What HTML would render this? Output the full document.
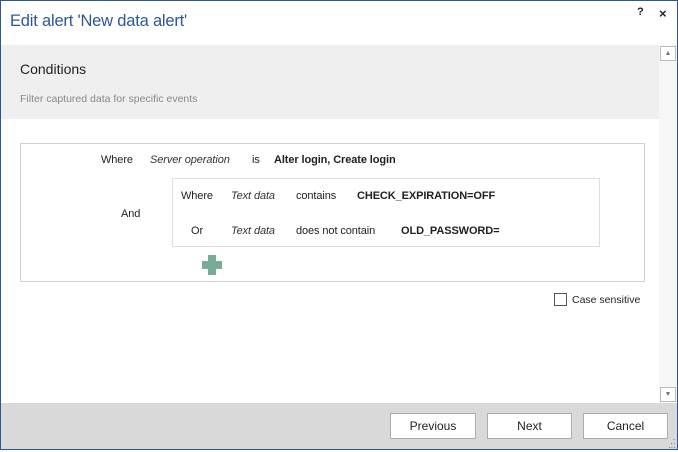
<!DOCTYPE html>
<html><head><style>
*{margin:0;padding:0;box-sizing:border-box}
body{width:678px;height:450px;position:relative;overflow:hidden;background:#fff;font-family:"Liberation Sans",sans-serif;color:#222}
.frame{position:absolute;left:0;top:0;width:678px;height:450px;border:1px solid #2b5797}
.abs{position:absolute;white-space:nowrap}
.t{font-size:11px;letter-spacing:-0.1px}
i{font-style:italic;color:#333}
b{font-weight:bold}
.btn{position:absolute;top:413px;height:26px;border:1px solid #adadad;background:#fff;font-size:12px;text-align:center;line-height:24px}
</style></head><body>
<div class="frame"></div>
<div class="abs" style="left:10px;top:12px;font-size:16.5px;color:#2b5797;letter-spacing:-0.2px">Edit alert 'New data alert'</div>
<div class="abs" style="left:637px;top:6px;font-size:11px;font-weight:bold">?</div>
<div class="abs" style="left:659px;top:6px;font-size:13px;font-weight:bold">×</div>
<div class="abs" style="left:1px;top:45px;width:658px;height:74px;background:#efefef"></div>
<div class="abs" style="left:20px;top:61px;font-size:14px;color:#222">Conditions</div>
<div class="abs" style="left:20px;top:93px;font-size:10.5px;color:#888">Filter captured data for specific events</div>
<div class="abs" style="left:659px;top:45px;width:18px;height:358px;background:#f7f7f7"></div>
<div class="abs" style="left:660px;top:46px;width:16px;height:15px;border:1px solid #bbb;background:#fff;font-size:7px;color:#777;text-align:center;line-height:13px">▲</div>
<div class="abs" style="left:660px;top:387px;width:16px;height:15px;border:1px solid #bbb;background:#fff;font-size:7px;color:#777;text-align:center;line-height:13px">▼</div>
<div class="abs" style="left:20px;top:143px;width:625px;height:139px;border:1px solid #d0d0d0"></div>
<div class="abs t" style="left:101px;top:154px">Where</div>
<div class="abs t" style="left:150px;top:154px"><i>Server operation</i></div>
<div class="abs t" style="left:252px;top:154px">is</div>
<div class="abs t" style="left:274px;top:154px"><b>Alter login, Create login</b></div>
<div class="abs" style="left:172px;top:178px;width:428px;height:69px;border:1px solid #ddd"></div>
<div class="abs t" style="left:121px;top:208px">And</div>
<div class="abs t" style="left:181px;top:190px">Where</div>
<div class="abs t" style="left:231px;top:190px"><i>Text data</i></div>
<div class="abs t" style="left:296px;top:190px">contains</div>
<div class="abs t" style="left:357px;top:190px"><b>CHECK_EXPIRATION=OFF</b></div>
<div class="abs t" style="left:191px;top:225px">Or</div>
<div class="abs t" style="left:231px;top:225px"><i>Text data</i></div>
<div class="abs t" style="left:296px;top:225px">does not contain</div>
<div class="abs t" style="left:401px;top:225px"><b>OLD_PASSWORD=</b></div>
<div class="abs" style="left:208px;top:255px;width:8px;height:20px;background:#7aab98"></div>
<div class="abs" style="left:202px;top:261px;width:20px;height:8px;background:#7aab98"></div>
<div class="abs" style="left:554px;top:293px;width:13px;height:13px;border:1px solid #555;background:#fff"></div>
<div class="abs" style="left:572px;top:294px;font-size:10.5px">Case sensitive</div>
<div class="abs" style="left:1px;top:403px;width:676px;height:46px;background:#d9d9d9"></div>
<div class="btn" style="left:390px;width:86px">Previous</div>
<div class="btn" style="left:487px;width:85px">Next</div>
<div class="btn" style="left:583px;width:85px">Cancel</div>
<div class="abs" style="left:668px;top:438px;font-size:8px;color:#2b5797;line-height:4px">&nbsp;&nbsp;·<br>&nbsp;··<br>···</div>
</body></html>
